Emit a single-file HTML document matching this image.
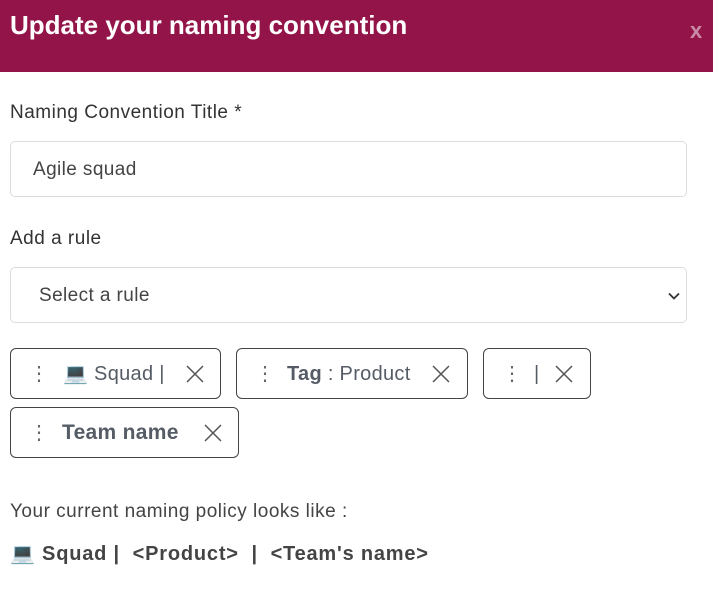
<!DOCTYPE html>
<html><head><style>
body{margin:0;width:713px;height:600px;background:#fff;font-family:"Liberation Sans",sans-serif;color:#333;position:relative;overflow:hidden}
.hd{position:absolute;left:0;top:0;width:713px;height:72px;background:#931448}
.hd h1{position:absolute;left:10px;top:10px;margin:0;font-size:26px;font-weight:bold;color:#fff;letter-spacing:0}
.x{position:absolute;left:690px;top:18px;color:#c98aa6;font-size:22px;font-weight:bold}
.lbl{position:absolute;left:10px;font-size:19px;color:#333;letter-spacing:0.5px;white-space:nowrap}
.inp{position:absolute;left:10px;width:677px;height:56px;border:1px solid #dcdcdc;border-radius:5px;box-sizing:border-box;font-size:19px;color:#444;line-height:56px;letter-spacing:0.4px}
.chip{position:absolute;height:51px;border:1px solid #444;border-radius:6px;box-sizing:border-box;font-size:20px;color:#555c66;line-height:50px;white-space:nowrap;letter-spacing:0.3px}
.chip .d{position:absolute;left:18px;top:0;font-size:20px;color:#666}
.chip svg{position:absolute;top:16px}
b{color:#555c66}
</style></head><body>
<div class="hd"><h1>Update your naming convention</h1><div class="x">x</div></div>
<div class="lbl" style="top:102px">Naming Convention Title *</div>
<div class="inp" style="top:141px;padding-left:22px">Agile squad</div>
<div class="lbl" style="top:228px">Add a rule</div>
<div class="inp" style="top:267px;padding-left:28px">Select a rule<svg style="position:absolute;right:6px;top:24px" width="12" height="8" viewBox="0 0 12 8"><path d="M1 1.5L6 6.5L11 1.5" stroke="#333" stroke-width="1.8" fill="none"/></svg></div>
<div class="chip" style="left:10px;top:348px;width:211px"><span class="d">⋮</span><span style="position:absolute;left:52px">💻 Squad |</span><svg style="left:175px" width="18" height="18" viewBox="0 0 18 18"><path d="M1 1L17 17M17 1L1 17" stroke="#555" stroke-width="1.5"/></svg></div>
<div class="chip" style="left:236px;top:348px;width:232px"><span class="d">⋮</span><span style="position:absolute;left:50px"><b>Tag</b> : Product</span><svg style="left:195px" width="18" height="18" viewBox="0 0 18 18"><path d="M1 1L17 17M17 1L1 17" stroke="#555" stroke-width="1.5"/></svg></div>
<div class="chip" style="left:483px;top:348px;width:108px"><span class="d">⋮</span><span style="position:absolute;left:50px">|</span><svg style="left:71px" width="18" height="18" viewBox="0 0 18 18"><path d="M1 1L17 17M17 1L1 17" stroke="#555" stroke-width="1.5"/></svg></div>
<div class="chip" style="left:10px;top:407px;width:229px"><span class="d">⋮</span><span style="position:absolute;left:51px;font-size:21px"><b>Team name</b></span><svg style="left:193px" width="18" height="18" viewBox="0 0 18 18"><path d="M1 1L17 17M17 1L1 17" stroke="#555" stroke-width="1.5"/></svg></div>
<div class="lbl" style="top:501px;color:#444">Your current naming policy looks like :</div>
<div class="lbl" style="top:541px;font-weight:bold;color:#444;white-space:pre;letter-spacing:0.8px;font-size:20px">💻 Squad |  &lt;Product&gt;  |  &lt;Team's name&gt;</div>
</body></html>
